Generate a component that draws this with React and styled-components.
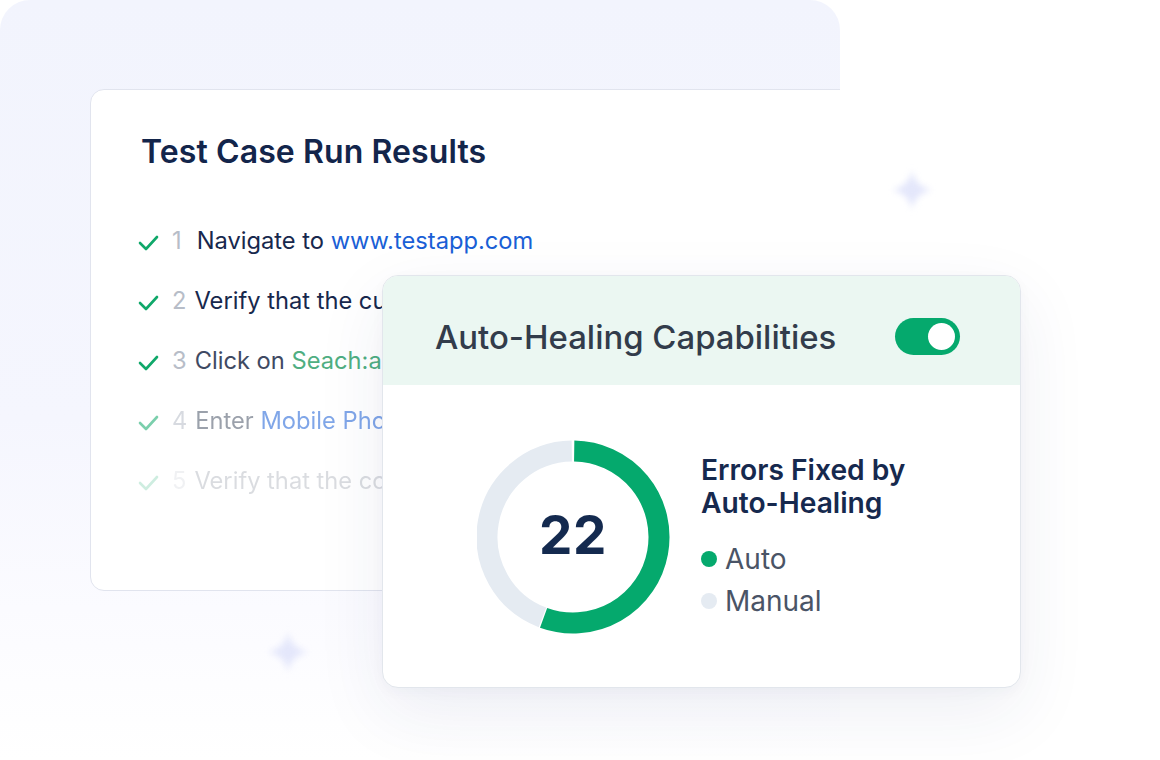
import styled, { createGlobalStyle } from "styled-components";

const GlobalStyle = createGlobalStyle`
  html, body {
    margin: 0;
    padding: 0;
    background: #ffffff;
  }
  body {
    font-family: Inter, "Noto Sans", sans-serif;
  }
`;

const Stage = styled.div`
  position: relative;
  width: 1160px;
  height: 760px;
  overflow: hidden;
  background: #ffffff;
`;

const BackPanel = styled.div`
  width: 840px;
  height: 760px;
  padding-top: 89px;
  box-sizing: border-box;
  border-radius: 30px 30px 0 0;
  overflow: hidden;
  background: linear-gradient(180deg, #f2f4fd 0%, #f5f6fe 55%, #fbfbff 80%, #ffffff 100%);
`;

const RunCard = styled.div`
  box-sizing: border-box;
  margin-left: 90px;
  width: 800px;
  height: 502px;
  padding: 42px 0 0 50px;
  background: #ffffff;
  border: 1px solid #e1e4ee;
  border-radius: 14px;
`;

const RunTitle = styled.h2`
  margin: 0;
  font-size: 32px;
  font-weight: 600;
  letter-spacing: 0.1px;
  color: #13254b;
  line-height: 40px;
`;

const StepList = styled.ul`
  list-style: none;
  margin: 50px 0 0 -3px;
  padding: 0;
  display: flex;
  flex-direction: column;
  gap: 24px;
`;

const Step = styled.li`
  display: flex;
  align-items: center;
  height: 36px;
  font-size: 23.7px;
  white-space: nowrap;
  opacity: ${(p) => p.$fade};
`;

const Check = styled.svg`
  width: 22px;
  height: 22px;
  margin-right: 12px;
  margin-top: 6px;
  flex-shrink: 0;
`;

const StepNum = styled.span`
  color: #b7bdc8;
  margin-right: ${(p) => (p.$wide ? "15px" : "8px")};
`;

const StepText = styled.span`
  color: ${(p) => p.$color || "#17284d"};
`;

const Link = styled.span`
  color: ${(p) => p.$color || "#1a5fd6"};
`;

const HealCard = styled.div`
  position: absolute;
  left: 382px;
  top: 275px;
  width: 639px;
  height: 413px;
  box-sizing: border-box;
  background: #ffffff;
  border: 1px solid #e2e6ec;
  border-radius: 16px;
  overflow: hidden;
  box-shadow: 0 24px 70px rgba(40, 50, 110, 0.08), 0 4px 14px rgba(40, 50, 110, 0.03);
  display: flex;
  flex-direction: column;
`;

const HealHeader = styled.div`
  height: 109px;
  flex-shrink: 0;
  background: #ebf7f2;
  display: flex;
  align-items: center;
  justify-content: space-between;
  padding: 12px 60px 0 52px;
  box-sizing: border-box;
`;

const HealTitle = styled.h3`
  margin: 0;
  font-size: 32.9px;
  font-weight: 500;
  color: #323c4b;
  letter-spacing: 0;
`;

const Toggle = styled.div`
  width: 65px;
  height: 37px;
  border-radius: 19px;
  background: #05a96d;
  display: flex;
  align-items: center;
  justify-content: flex-end;
  padding: 0 5px;
  box-sizing: border-box;
`;

const Knob = styled.div`
  width: 27px;
  height: 27px;
  border-radius: 50%;
  background: #ffffff;
`;

const HealBody = styled.div`
  flex: 1;
  display: flex;
  align-items: flex-start;
  padding: 55px 0 0 94px;
`;

const Donut = styled.div`
  position: relative;
  width: 194px;
  height: 194px;
  flex-shrink: 0;
`;

const DonutValue = styled.div`
  position: absolute;
  inset: 0;
  display: flex;
  align-items: center;
  justify-content: center;
  padding: 0 2px 4px 0;
  font-size: 53px;
  font-weight: 700;
  color: #142a4f;
  letter-spacing: 0.5px;
`;

const Legend = styled.div`
  margin: 14px 0 0 30px;
  display: flex;
  flex-direction: column;
`;

const LegendTitle = styled.div`
  font-size: 28.2px;
  font-weight: 600;
  line-height: 33px;
  color: #16294e;
  margin-bottom: 18px;
`;

const LegendItem = styled.div`
  display: flex;
  align-items: center;
  font-size: 28px;
  line-height: 42px;
  color: #4a5466;
`;

const Dot = styled.span`
  width: 16px;
  height: 16px;
  border-radius: 50%;
  background: ${(p) => p.$color};
  margin-right: 8px;
  flex-shrink: 0;
`;

const Sparkle = styled.svg`
  position: absolute;
  left: ${(p) => p.$x}px;
  top: ${(p) => p.$y}px;
  width: 60px;
  height: 60px;
  filter: blur(3px);
`;

function CheckIcon({ color }) {
  return (
    <Check viewBox="0 0 22 22">
      <polyline
        points="2,11 8,17 19,5"
        fill="none"
        stroke={color}
        strokeWidth="2.6"
        strokeLinecap="round"
        strokeLinejoin="round"
      />
    </Check>
  );
}

function arcPath(cx, cy, r, startDeg, endDeg) {
  const toXY = (deg) => {
    const rad = ((deg - 90) * Math.PI) / 180;
    return [cx + r * Math.cos(rad), cy + r * Math.sin(rad)];
  };
  const [x1, y1] = toXY(startDeg);
  const [x2, y2] = toXY(endDeg);
  const large = endDeg - startDeg > 180 ? 1 : 0;
  return `M ${x1} ${y1} A ${r} ${r} 0 ${large} 1 ${x2} ${y2}`;
}

function DonutChart() {
  return (
    <svg width="194" height="194" viewBox="0 0 194 194">
      <path d={arcPath(96, 97, 86, 200.8, 359.2)} fill="none" stroke="#e5ebf2" strokeWidth="21" />
      <path d={arcPath(96, 97, 86, 0.8, 200)} fill="none" stroke="#05a96d" strokeWidth="21" />
    </svg>
  );
}

function SparkleShape({ x, y }) {
  return (
    <Sparkle $x={x} $y={y} viewBox="0 0 60 60">
      <path d="M30 10 C32 21 38 27 50 30 C38 33 32 39 30 50 C28 39 22 33 10 30 C22 27 28 21 30 10 Z" fill="#e4e7fb" />
    </Sparkle>
  );
}

const steps = [
  { n: "1", text: "Navigate to", link: "www.testapp.com", fade: 1, wide: true },
  { n: "2", text: "Verify that the current page title is Test App", fade: 1 },
  { n: "3", text: "Click on", link: "Seach:app", linkColor: "#4fae82", textColor: "#3f4a63", fade: 1 },
  { n: "4", text: "Enter", link: "Mobile Phone", fade: 0.55, textColor: "#4a5568" },
  { n: "5", text: "Verify that the count of results", fade: 0.2, textColor: "#4a5568" },
];

function App() {
  return (
    <>
      <GlobalStyle />
      <Stage>
        <BackPanel>
          <RunCard>
            <RunTitle>Test Case Run Results</RunTitle>
            <StepList>
              {steps.map((s) => (
                <Step key={s.n} $fade={s.fade}>
                  <CheckIcon color="#10a86a" />
                  <StepNum $wide={s.wide}>{s.n}</StepNum>
                  <span>
                    <StepText $color={s.textColor}>{s.text}</StepText>
                    {s.link && (
                      <>
                        {" "}
                        <Link $color={s.linkColor}>{s.link}</Link>
                      </>
                    )}
                  </span>
                </Step>
              ))}
            </StepList>
          </RunCard>
        </BackPanel>

        <SparkleShape x={882} y={160} />
        <SparkleShape x={258} y={622} />

        <HealCard>
          <HealHeader>
            <HealTitle>Auto-Healing Capabilities</HealTitle>
            <Toggle>
              <Knob />
            </Toggle>
          </HealHeader>
          <HealBody>
            <Donut>
              <DonutChart />
              <DonutValue>22</DonutValue>
            </Donut>
            <Legend>
              <LegendTitle>
                Errors Fixed by
                <br />
                Auto-Healing
              </LegendTitle>
              <LegendItem>
                <Dot $color="#05a96d" />
                Auto
              </LegendItem>
              <LegendItem>
                <Dot $color="#e5ebf2" />
                Manual
              </LegendItem>
            </Legend>
          </HealBody>
        </HealCard>
      </Stage>
    </>
  );
}

export default App;
